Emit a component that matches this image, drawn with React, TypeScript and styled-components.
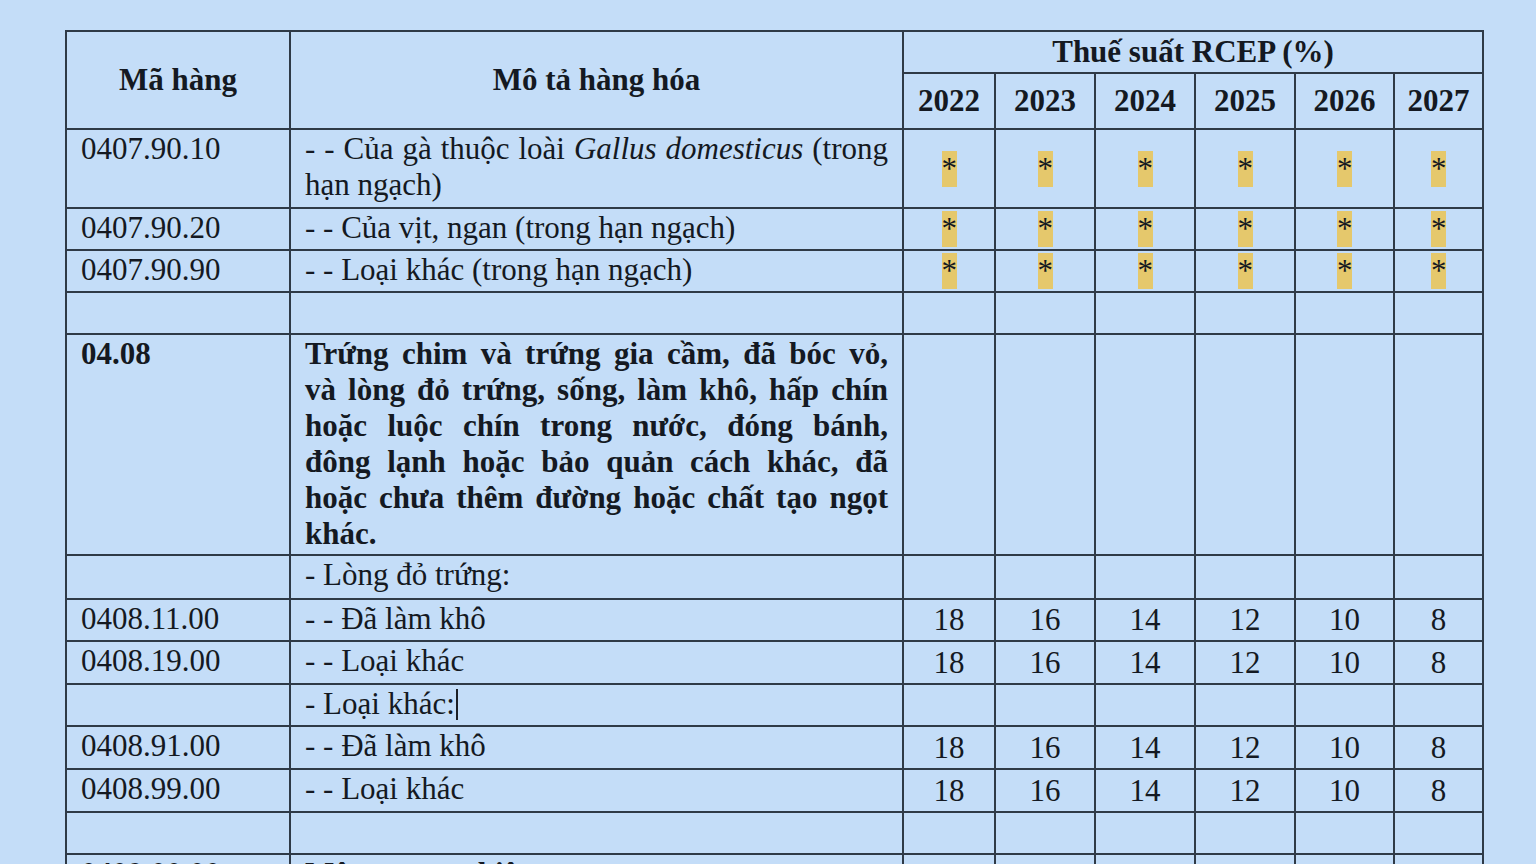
import React from 'react'
import styled, { createGlobalStyle } from 'styled-components'

const GlobalStyle = createGlobalStyle`
    html, body {
        margin: 0;
        padding: 0;
        background: #c4ddf8;
    }
    body {
        font-family: "Liberation Serif", "Times New Roman", serif;
        color: #141922;
        overflow: hidden;
    }
`

const Page = styled.div`
    height: 864px;
    overflow: hidden;
    padding: 30px 0 0 65px;
    box-sizing: border-box;
`

const Table = styled.table`
    width: 1417px;
    border-collapse: collapse;
    table-layout: fixed;
    border: 2px solid #2f3a47;
    font-size: 31px;
    line-height: 36px;
`

const Row = styled.tr<{ $h: number }>`
    height: ${p => p.$h}px;
`

const HeadCell = styled.th`
    border: 2px solid #2f3a47;
    padding: 0;
    font-weight: bold;
    text-align: center;
    vertical-align: middle;
`

const Cell = styled.td<{ $bold?: boolean }>`
    border: 2px solid #2f3a47;
    padding: 1px 14px 2px 14px;
    vertical-align: top;
    font-weight: ${p => (p.$bold ? 'bold' : 'normal')};
`

const RateCell = styled.td`
    border: 2px solid #2f3a47;
    padding: 0;
    text-align: center;
    vertical-align: middle;
`

const Star = styled.span`
    display: inline-block;
    width: 15px;
    height: 36px;
    line-height: 36px;
    background: #e5c86c;
`

const Line = styled.span<{ $last?: boolean }>`
    display: block;
    text-align: justify;
    text-align-last: ${p => (p.$last ? 'left' : 'justify')};
`

const Caret = styled.span`
    display: inline-block;
    width: 2px;
    height: 31px;
    margin-left: 1px;
    vertical-align: -6px;
    background: #1b1f26;
`

const years = ['2022', '2023', '2024', '2025', '2026', '2027']
const widths = [224, 613, 92, 100, 100, 100, 99, 89]

type Item = {
    code: string
    desc: React.ReactNode
    rates: 'star' | 'none' | string[]
    h: number
    bold?: boolean
}

const steps = ['18', '16', '14', '12', '10', '8']

const items: Item[] = [
    {
        code: '0407.90.10',
        desc: (
            <>
                <Line>- - Của gà thuộc loài <i>Gallus domesticus</i> (trong</Line>
                <Line $last>hạn ngạch)</Line>
            </>
        ),
        rates: 'star',
        h: 79,
    },
    { code: '0407.90.20', desc: '- - Của vịt, ngan (trong hạn ngạch)', rates: 'star', h: 42 },
    { code: '0407.90.90', desc: '- - Loại khác (trong hạn ngạch)', rates: 'star', h: 42 },
    { code: '', desc: '', rates: 'none', h: 42 },
    {
        code: '04.08',
        bold: true,
        desc: (
            <>
                <Line>Trứng chim và trứng gia cầm, đã bóc vỏ,</Line>
                <Line>và lòng đỏ trứng, sống, làm khô, hấp chín</Line>
                <Line>hoặc luộc chín trong nước, đóng bánh,</Line>
                <Line>đông lạnh hoặc bảo quản cách khác, đã</Line>
                <Line>hoặc chưa thêm đường hoặc chất tạo ngọt</Line>
                <Line $last>khác.</Line>
            </>
        ),
        rates: 'none',
        h: 221,
    },
    { code: '', desc: '- Lòng đỏ trứng:', rates: 'none', h: 44 },
    { code: '0408.11.00', desc: '- - Đã làm khô', rates: steps, h: 42 },
    { code: '0408.19.00', desc: '- - Loại khác', rates: steps, h: 43 },
    {
        code: '',
        desc: (
            <>
                - Loại khác:<Caret />
            </>
        ),
        rates: 'none',
        h: 42,
    },
    { code: '0408.91.00', desc: '- - Đã làm khô', rates: steps, h: 43 },
    { code: '0408.99.00', desc: '- - Loại khác', rates: steps, h: 43 },
    { code: '', desc: '', rates: 'none', h: 42 },
    { code: '0409.00.00', desc: 'Mật ong tự nhiên.', rates: 'none', h: 42, bold: true },
]

function Rates({ rates }: { rates: Item['rates'] }) {
    return (
        <>
            {years.map((y, i) => (
                <RateCell key={y}>
                    {rates === 'star' ? <Star>*</Star> : rates === 'none' ? null : rates[i]}
                </RateCell>
            ))}
        </>
    )
}

export default function App() {
    return (
        <Page>
            <GlobalStyle />
            <Table>
                <colgroup>
                    {widths.map((w, i) => (
                        <col key={i} style={{ width: w }} />
                    ))}
                </colgroup>
                <thead>
                    <Row $h={42}>
                        <HeadCell rowSpan={2}>Mã hàng</HeadCell>
                        <HeadCell rowSpan={2}>Mô tả hàng hóa</HeadCell>
                        <HeadCell colSpan={6}>Thuế suất RCEP (%)</HeadCell>
                    </Row>
                    <Row $h={56}>
                        {years.map(y => (
                            <HeadCell key={y}>{y}</HeadCell>
                        ))}
                    </Row>
                </thead>
                <tbody>
                    {items.map((it, i) => (
                        <Row $h={it.h} key={i}>
                            <Cell $bold={it.bold}>{it.code}</Cell>
                            <Cell $bold={it.bold}>{it.desc}</Cell>
                            <Rates rates={it.rates} />
                        </Row>
                    ))}
                </tbody>
            </Table>
        </Page>
    )
}
